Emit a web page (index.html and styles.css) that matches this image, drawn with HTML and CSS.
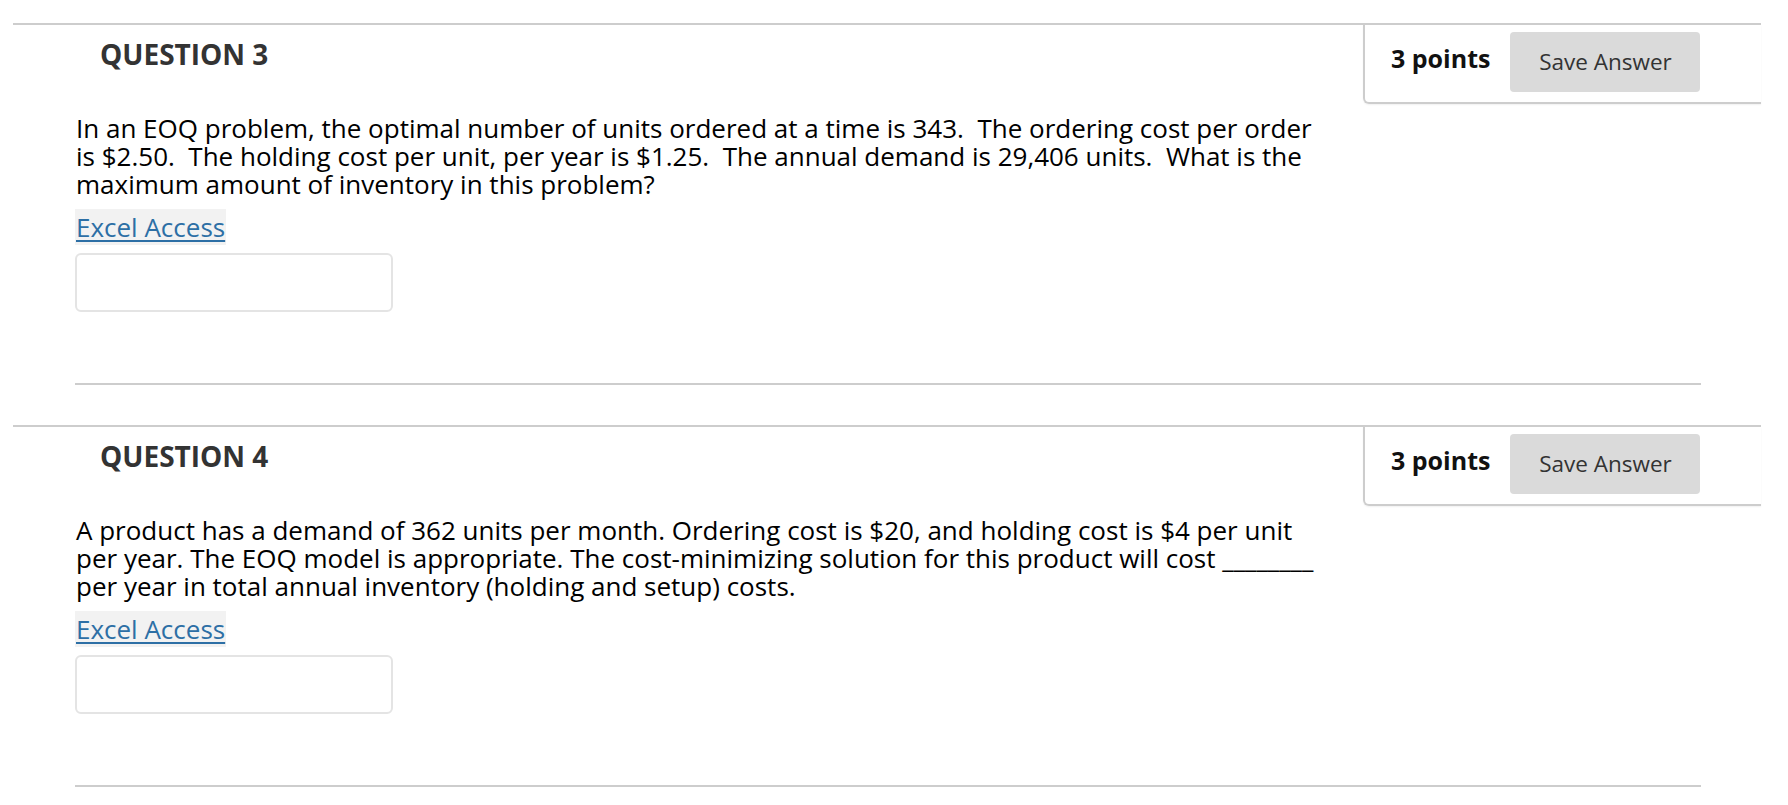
FILE: index.html
```html
<!DOCTYPE html>
<html lang="en">
<head>
<meta charset="utf-8">
<title>Questions</title>
<link rel="stylesheet" href="styles.css">
</head>
<body>
<div class="page">
  <section class="question">
    <div class="q-header">
      <h3 class="q-title">QUESTION 3</h3>
      <div class="points-box">
        <span class="points">3 points</span>
        <button class="save-btn" type="button">Save Answer</button>
      </div>
    </div>
    <div class="q-body">
      <p class="q-text">In an EOQ problem, the optimal number of units ordered at a time is 343.&nbsp; The ordering cost per order is $2.50.&nbsp; The holding cost per unit, per year is $1.25.&nbsp; The annual demand is 29,406 units.&nbsp; What is the maximum amount of inventory in this problem?</p>
      <a class="excel-link" href="#">Excel Access</a>
      <input class="answer-input" type="text">
    </div>
    <div class="q-sep"></div>
  </section>
  <section class="question">
    <div class="q-header">
      <h3 class="q-title">QUESTION 4</h3>
      <div class="points-box">
        <span class="points">3 points</span>
        <button class="save-btn" type="button">Save Answer</button>
      </div>
    </div>
    <div class="q-body">
      <p class="q-text">A product has a demand of 362 units per month. Ordering cost is $20, and holding cost is $4 per unit per year. The EOQ model is appropriate. The cost-minimizing solution for this product will cost ________ per year in total annual inventory (holding and setup) costs.</p>
      <a class="excel-link" href="#">Excel Access</a>
      <input class="answer-input" type="text">
    </div>
    <div class="q-sep"></div>
  </section>
</div>
</body>
</html>
```

FILE: styles.css
```css
* {
  box-sizing: border-box;
}

html, body {
  margin: 0;
  padding: 0;
  background: #ffffff;
}

body {
  font-family: "Open Sans", "Noto Sans", "Liberation Sans", sans-serif;
  color: #000;
}

.page {
  padding-top: 23px;
}

.question {
  margin-left: 13px;
  width: 1748px;
  border-top: 2px solid #cdcdcd;
  margin-bottom: 40px;
}

.q-header {
  display: flex;
  justify-content: space-between;
  align-items: flex-start;
}

.q-title {
  margin: 10px 0 0 87px;
  font-size: 28px;
  line-height: 38px;
  font-weight: 700;
  color: #333;
}

.points-box {
  width: 398px;
  height: 79px;
  display: flex;
  align-items: center;
  padding: 0 0 4px 26px;
  border-left: 2px solid #cdcdcd;
  border-bottom: 2px solid #cdcdcd;
  border-bottom-left-radius: 6px;
  box-shadow: 0 1px 2px rgba(0, 0, 0, 0.06);
}

.points {
  font-size: 25px;
  font-weight: 700;
  color: #111;
  margin: 0 20px 8px 0;
  white-space: nowrap;
}

.save-btn {
  width: 190px;
  height: 60px;
  border: none;
  border-radius: 4px;
  background: #dadada;
  color: #333;
  font-family: "Open Sans", "Noto Sans", "Liberation Sans", sans-serif;
  font-size: 22.5px;
  padding: 0;
}

.q-body {
  margin: 10px 0 0 63px;
  display: flex;
  flex-direction: column;
  align-items: flex-start;
}

.q-text {
  margin: 0;
  width: 1250px;
  font-size: 26px;
  line-height: 28px;
  color: #000;
}

.excel-link {
  margin: 11px 0 0 -1px;
  display: inline-block;
  height: 36px;
  line-height: 36px;
  padding: 0 1px;
  background: #f2f2f2;
  color: #2d6fa5;
  font-size: 26px;
  text-decoration: underline;
  text-underline-offset: 3px;
}

.answer-input {
  margin: 8px 0 0 -1px;
  width: 318px;
  height: 59px;
  border: 2px solid #e4e4e4;
  border-radius: 6px;
  background: #fff;
}

.q-sep {
  margin: 71px 0 0 62px;
  width: 1626px;
  border-top: 2px solid #cdcdcd;
}
```
